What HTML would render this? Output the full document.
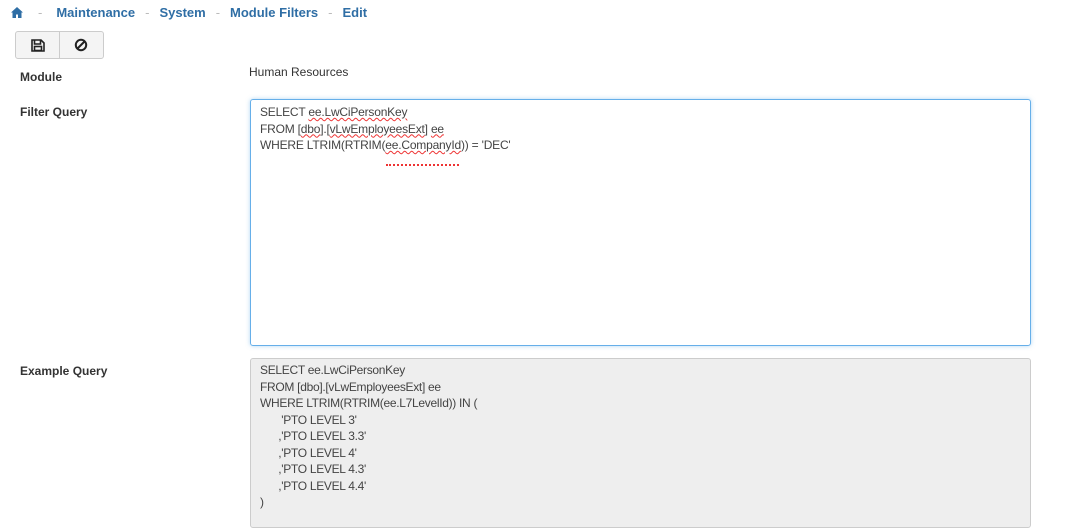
<!DOCTYPE html>
<html><head><style>
body{margin:0;width:1079px;height:517px;overflow:hidden;background:#fff;font-family:"Liberation Sans",sans-serif;color:#333;position:relative}
.bc{position:absolute;top:5px;left:11px;font-size:13px;font-weight:bold;color:#2f6ea5;white-space:nowrap}
.bc span.sep{color:#bbb;font-weight:normal;margin:0 10px}
.btns{position:absolute;left:15px;top:31px;width:87px;height:26px;border:1px solid #ccc;border-radius:3px;background:#f4f4f4}
.btns div{position:absolute;top:0;height:26px;width:43px}
.lbl{position:absolute;left:20px;font-size:12px;font-weight:bold;color:#333}
.ta{position:absolute;left:250px;top:99px;border:1px solid #66afe9;border-radius:3px;box-shadow:0 0 4px rgba(102,175,233,.5);font-size:12px;line-height:16.5px;padding:4px 0 0 9px;box-sizing:border-box;width:781px;height:247px;color:#444;letter-spacing:-0.2px}
.ex{position:absolute;left:250px;top:358px;width:781px;height:170px;border:1px solid #ccc;border-radius:3px;background:#eee;box-sizing:border-box;padding:3px 0 0 9px;font-size:12px;line-height:16.5px;color:#444;white-space:pre;letter-spacing:-0.3px}
u{text-decoration:underline wavy #e33;text-decoration-thickness:1px}
</style></head><body>
<div class="bc"><svg width="12" height="11" viewBox="0 0 12 11" style="vertical-align:-1px"><path d="M6 0L0 5.5h1.5V11h3.5V7.5h2V11h3.5V5.5H12z" fill="#2f6ea5"/></svg><span class="sep" style="margin:0 14px 0 15px">-</span>Maintenance<span class="sep">-</span>System<span class="sep">-</span>Module Filters<span class="sep">-</span>Edit</div>
<div class="btns"><div style="left:0;border-right:1px solid #ccc"><svg width="43" height="26"><g fill="none" stroke="#222" stroke-width="1.6"><path d="M16 8h9l3 3v8h-12z"/><path d="M18.5 8v4h6V8"/><rect x="18.5" y="14.5" width="7" height="4"/></g></svg></div><div style="left:44px"><svg width="43" height="26"><g fill="none" stroke="#222" stroke-width="2"><circle cx="21" cy="13" r="5.2"/><path d="M17.5 16.5l7-7"/></g></svg></div></div>
<div class="lbl" style="top:70px">Module</div>
<div style="position:absolute;left:249px;top:65px;font-size:12px;color:#333">Human Resources</div>
<div class="lbl" style="top:105px">Filter Query</div>
<div class="ta">SELECT <u>ee.LwCiPersonKey</u><br>FROM [<u>dbo</u>].[<u>vLwEmployeesExt</u>] <u>ee</u><br>WHERE LTRIM(RTRIM(<u>ee.CompanyId</u>)) = 'DEC'<div style="position:absolute;left:135px;top:64px;width:73px;border-top:2px dotted #e33"></div></div>
<div class="lbl" style="top:364px">Example Query</div>
<div class="ex">SELECT ee.LwCiPersonKey
FROM [dbo].[vLwEmployeesExt] ee
WHERE LTRIM(RTRIM(ee.L7LevelId)) IN (
       'PTO LEVEL 3'
      ,'PTO LEVEL 3.3'
      ,'PTO LEVEL 4'
      ,'PTO LEVEL 4.3'
      ,'PTO LEVEL 4.4'
)</div>
</body></html>
